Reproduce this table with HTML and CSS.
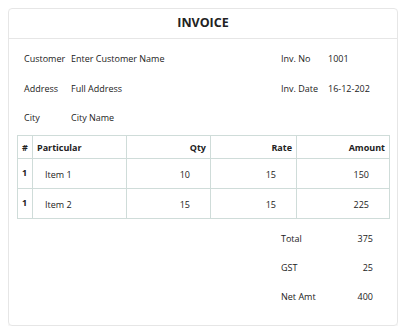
FILE: index.html
```html
<!DOCTYPE html>
<html lang="en">
<head>
    <meta charset="UTF-8">
    <meta name="viewport" content="width=device-width, initial-scale=1.0">
    <title>Invoice</title>
    <link rel="stylesheet" href="styles.css">
</head>
<body>
    <div class="invoice">
        <div class="invoice-header">INVOICE</div>

        <div class="info">
            <div class="info-col">
                <div class="info-row"><span class="label">Customer</span><span class="value">Enter Customer Name</span></div>
                <div class="info-row"><span class="label">Address</span><span class="value">Full Address</span></div>
                <div class="info-row"><span class="label">City</span><span class="value">City Name</span></div>
            </div>
            <div class="info-col right">
                <div class="info-row"><span class="label">Inv. No</span><span class="value">1001</span></div>
                <div class="info-row"><span class="label">Inv. Date</span><span class="value">16-12-202</span></div>
            </div>
        </div>

        <table class="items">
            <colgroup>
                <col class="c-num">
                <col class="c-part">
                <col class="c-qty">
                <col class="c-rate">
                <col>
            </colgroup>
            <thead>
                <tr>
                    <th class="num">#</th>
                    <th class="part">Particular</th>
                    <th>Qty</th>
                    <th>Rate</th>
                    <th>Amount</th>
                </tr>
            </thead>
            <tbody>
                <tr>
                    <td class="num">1</td>
                    <td class="part">Item 1</td>
                    <td>10</td>
                    <td>15</td>
                    <td>150</td>
                </tr>
                <tr>
                    <td class="num">1</td>
                    <td class="part">Item 2</td>
                    <td>15</td>
                    <td>15</td>
                    <td>225</td>
                </tr>
            </tbody>
        </table>

        <div class="totals">
            <div class="total-row"><span>Total</span><span>375</span></div>
            <div class="total-row"><span>GST</span><span>25</span></div>
            <div class="total-row"><span>Net Amt</span><span>400</span></div>
        </div>
    </div>
</body>
</html>
```

FILE: styles.css
```css
body {
    margin: 8px;
    font-family: 'Open Sans', sans-serif;
    font-size: 9px;
    color: #222;
    background-color: #fff;
}

.invoice {
    width: 388px;
    height: 316px;
    border: 1px solid #e6e6e6;
    border-radius: 4px;
    box-shadow: 0 1px 2px rgba(0, 0, 0, 0.08);
}

.invoice-header {
    height: 29px;
    line-height: 27px;
    text-align: center;
    font-size: 12.5px;
    font-weight: bold;
    border-bottom: 1px solid #e6e6e6;
}

.info {
    display: flex;
    justify-content: space-between;
    padding: 5px 0 0 15px;
}

.info-col {
    display: flex;
    flex-direction: column;
}

.info-col.right {
    width: 116px;
}

.info-row {
    display: flex;
    height: 29.5px;
    align-items: center;
}

.info-row .label {
    width: 47px;
}

.items {
    width: 373px;
    margin: 2px 0 0 8px;
    border-collapse: collapse;
    table-layout: fixed;
}

.c-num { width: 15px; }
.c-part { width: 94px; }
.c-qty { width: 84px; }
.c-rate { width: 86px; }

.items th,
.items td {
    border: 1px solid #cfdcd9;
    text-align: right;
    padding: 0 4px;
}

.items thead tr {
    height: 23px;
}

.items tbody tr {
    height: 30px;
}

.items th {
    font-weight: bold;
    padding-top: 1px;
}

.items td {
    padding: 2px 20px 0 4px;
}

.items .num {
    text-align: left;
    font-weight: bold;
}

.items td.num {
    vertical-align: top;
    padding: 7px 0 0 4px;
}

.items .part {
    text-align: left;
}

.items td.part {
    padding-left: 12px;
}

.totals {
    display: flex;
    flex-direction: column;
    width: 92px;
    margin: 5px 0 0 272px;
}

.total-row {
    display: flex;
    justify-content: space-between;
    height: 29px;
    align-items: center;
}
```
